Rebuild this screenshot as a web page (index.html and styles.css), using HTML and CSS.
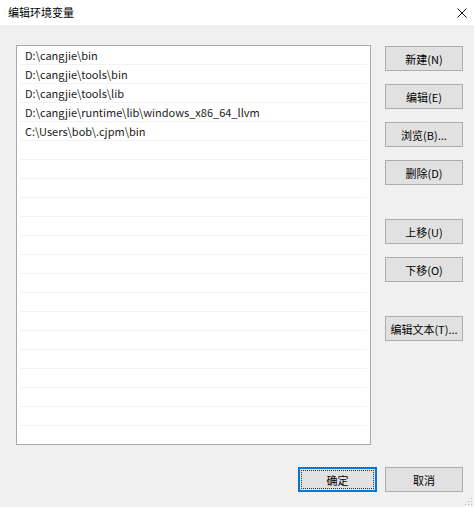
FILE: index.html
```html
<!DOCTYPE html>
<html lang="zh-CN">
<head>
    <meta charset="UTF-8">
    <title>编辑环境变量</title>
    <link rel="stylesheet" href="styles.css">
</head>
<body>

    <!-- Dialog window -->
    <div class="window">
        <div class="titlebar">
            <span class="title">编辑环境变量</span>
            <svg class="close" width="10" height="10" viewBox="0 0 10 10" aria-label="关闭">
                <path d="M0.5 0.5 L9.5 9.5 M9.5 0.5 L0.5 9.5" stroke="#111" stroke-width="1"/>
            </svg>
        </div>

        <div class="content">
            <div class="main">
                <ul class="pathlist">
                    <li>D:\cangjie\bin</li>
                    <li>D:\cangjie\tools\bin</li>
                    <li>D:\cangjie\tools\lib</li>
                    <li>D:\cangjie\runtime\lib\windows_x86_64_llvm</li>
                    <li>C:\Users\bob\.cjpm\bin</li>
                    <li></li><li></li><li></li><li></li><li></li>
                    <li></li><li></li><li></li><li></li><li></li>
                    <li></li><li></li><li></li><li></li><li></li>
                    <li></li>
                </ul>

                <div class="side">
                    <button class="btn">新建(N)</button>
                    <button class="btn">编辑(E)</button>
                    <button class="btn">浏览(B)...</button>
                    <button class="btn">删除(D)</button>
                    <button class="btn gap">上移(U)</button>
                    <button class="btn">下移(O)</button>
                    <button class="btn gap">编辑文本(T)...</button>
                </div>
            </div>

            <div class="footer">
                <button class="btn default">确定</button>
                <button class="btn">取消</button>
            </div>
        </div>

        <svg class="grip" width="10" height="10" viewBox="0 0 10 10">
            <rect x="8" y="2" width="1" height="1" fill="#b5b5b5"/>
            <rect x="5" y="5" width="1" height="1" fill="#b5b5b5"/>
            <rect x="8" y="5" width="1" height="1" fill="#b5b5b5"/>
            <rect x="2" y="8" width="1" height="1" fill="#b5b5b5"/>
            <rect x="5" y="8" width="1" height="1" fill="#b5b5b5"/>
            <rect x="8" y="8" width="1" height="1" fill="#b5b5b5"/>
        </svg>
    </div>

</body>
</html>
```

FILE: styles.css
```css
* {
    box-sizing: border-box;
}

body {
    margin: 0;
    font-family: "Noto Sans CJK SC", "Noto Sans", sans-serif;
    font-size: 11px;
    color: #000;
}

.window {
    width: 474px;
    height: 507px;
    background-color: #f0f0f0;
    position: relative;
}

.titlebar {
    height: 25px;
    background-color: #fff;
    display: flex;
    align-items: center;
    justify-content: space-between;
    padding: 0 7px 0 8px;
}

.title {
    font-size: 11px;
    line-height: 1;
}

.content {
    padding: 20px 11px 0 16px;
}

.main {
    display: flex;
    gap: 14px;
}

.pathlist {
    list-style: none;
    margin: 0;
    padding: 0 3px;
    width: 355px;
    height: 400px;
    overflow: hidden;
    background-color: #fff;
    border: 1px solid #a9a9a9;
}

.pathlist li {
    height: 19px;
    line-height: 19px;
    padding-left: 5px;
    border-bottom: 1px solid #f2f2f2;
    color: #1a1a1a;
    white-space: nowrap;
}

.side {
    display: flex;
    flex-direction: column;
    gap: 13px;
    padding-top: 1px;
}

.btn {
    width: 78px;
    height: 25px;
    padding: 0;
    font-family: inherit;
    font-size: 11px;
    color: #000;
    background-color: #e1e1e1;
    border: 1px solid #adadad;
}

.side .gap {
    margin-top: 21px;
}

.footer {
    display: flex;
    justify-content: flex-end;
    gap: 8px;
    margin-top: 22px;
}

.btn.default {
    width: 79px;
    border: 2px solid #0078d7;
    outline: 1px dotted #333;
    outline-offset: -4px;
}

.grip {
    position: absolute;
    right: 1px;
    bottom: 1px;
}
```
